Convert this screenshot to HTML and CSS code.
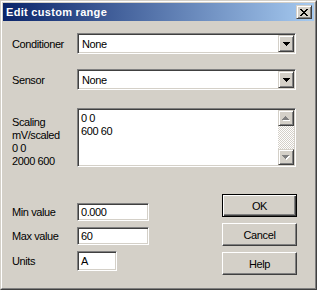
FILE: index.html
```html
<!DOCTYPE html>
<html>
<head>
    <title>Edit custom range</title>
    <link rel="stylesheet" href="styles.css">
</head>
<body>
    <div class="window">
        <div class="frame">
            <div class="caption">
                <span class="caption-title">Edit custom range</span>
                <button class="close-btn">
                    <svg width="8" height="7" viewBox="0 0 8 7" shape-rendering="crispEdges">
                        <path fill="#000" d="M0 0h2v1H0z M6 0h2v1H6z M1 1h2v1H1z M5 1h2v1H5z M2 2h4v1H2z M3 3h2v1H3z M2 4h4v1H2z M1 5h2v1H1z M5 5h2v1H5z M0 6h2v1H0z M6 6h2v1H6z"/>
                    </svg>
                </button>
            </div>

            <div class="client">
                <div class="row">
                    <span class="label">Conditioner</span>
                    <div class="combo">
                        <span class="combo-text">None</span>
                        <span class="arrow-btn">
                            <svg width="7" height="4" viewBox="0 0 7 4" shape-rendering="crispEdges">
                                <path fill="#000" d="M0 0h7v1H0z M1 1h5v1H1z M2 2h3v1H2z M3 3h1v1H3z"/>
                            </svg>
                        </span>
                    </div>
                </div>

                <div class="row row-sensor">
                    <span class="label">Sensor</span>
                    <div class="combo">
                        <span class="combo-text">None</span>
                        <span class="arrow-btn">
                            <svg width="7" height="4" viewBox="0 0 7 4" shape-rendering="crispEdges">
                                <path fill="#000" d="M0 0h7v1H0z M1 1h5v1H1z M2 2h3v1H2z M3 3h1v1H3z"/>
                            </svg>
                        </span>
                    </div>
                </div>

                <div class="row row-scaling">
                    <div class="label label-multi">Scaling<br>mV/scaled<br>0 0<br>2000 600</div>
                    <div class="memo">
                        <div class="memo-text">0 0<br>600 60</div>
                        <div class="scrollbar">
                            <span class="arrow-btn scroll-btn">
                                <svg width="8" height="5" viewBox="0 0 8 5" shape-rendering="crispEdges">
                                    <path fill="#fff" d="M4 1h1v1H4z M3 2h3v1H3z M2 3h5v1H2z M1 4h7v1H1z"/>
                                    <path fill="#808080" d="M3 0h1v1H3z M2 1h3v1H2z M1 2h5v1H1z M0 3h7v1H0z"/>
                                </svg>
                            </span>
                            <span class="scroll-track"></span>
                            <span class="arrow-btn scroll-btn">
                                <svg width="8" height="5" viewBox="0 0 8 5" shape-rendering="crispEdges">
                                    <path fill="#fff" d="M1 1h7v1H1z M2 2h5v1H2z M3 3h3v1H3z M4 4h1v1H4z"/>
                                    <path fill="#808080" d="M0 0h7v1H0z M1 1h5v1H1z M2 2h3v1H2z M3 3h1v1H3z"/>
                                </svg>
                            </span>
                        </div>
                    </div>
                </div>

                <div class="bottom">
                    <div class="fields">
                        <div class="field">
                            <span class="label">Min value</span>
                            <div class="input">0.000</div>
                        </div>
                        <div class="field">
                            <span class="label">Max value</span>
                            <div class="input">60</div>
                        </div>
                        <div class="field">
                            <span class="label">Units</span>
                            <div class="input input-units">A</div>
                        </div>
                    </div>
                    <div class="buttons">
                        <button class="btn btn-default">OK</button>
                        <button class="btn">Cancel</button>
                        <button class="btn">Help</button>
                    </div>
                </div>
            </div>
        </div>
    </div>
</body>
</html>
```

FILE: styles.css
```css
body {
    margin: 0;
    font-family: "Liberation Sans", Arial, sans-serif;
    font-size: 11px;
    color: #000;
}
.window {
    width: 317px;
    height: 290px;
    box-sizing: border-box;
    border: 1px solid;
    border-color: #d4d0c8 #404040 #404040 #d4d0c8;
    background: #d4d0c8;
}
.frame {
    height: 100%;
    box-sizing: border-box;
    border: 1px solid;
    border-color: #fff #808080 #808080 #fff;
    padding: 1px;
}
.caption {
    height: 18px;
    display: flex;
    align-items: center;
    justify-content: space-between;
    padding: 0 2px 0 3px;
    background: linear-gradient(90deg, #0a246a, #a6caf0);
}
.caption-title {
    color: #fff;
    font-weight: bold;
    letter-spacing: 0.3px;
}
.close-btn, .arrow-btn {
    box-sizing: border-box;
    display: flex;
    align-items: center;
    justify-content: center;
    padding: 0;
    background: #d4d0c8;
    border: 1px solid;
    border-color: #d4d0c8 #404040 #404040 #d4d0c8;
    box-shadow: inset 1px 1px #fff, inset -1px -1px #808080;
}
.close-btn {
    width: 16px;
    height: 14px;
}
.client {
    padding: 12px 18px 0 9px;
    letter-spacing: -0.4px;
}
.row {
    display: flex;
    align-items: center;
}
.label {
    width: 65px;
    flex: none;
}
.combo, .memo, .input {
    box-sizing: border-box;
    background: #fff;
    border: 1px solid;
    border-color: #808080 #fff #fff #808080;
    box-shadow: inset 1px 1px #404040, inset -1px -1px #d4d0c8;
}
.combo {
    width: 219px;
    height: 21px;
    display: flex;
    align-items: center;
    padding: 1px;
}
.combo-text {
    flex: 1;
    padding-left: 3px;
}
.arrow-btn {
    width: 16px;
    height: 17px;
}
.row-sensor {
    margin-top: 15px;
}
.row-scaling {
    align-items: flex-start;
    margin-top: 18px;
}
.label-multi {
    line-height: 13px;
    padding-top: 8px;
}
.memo {
    width: 219px;
    height: 59px;
    display: flex;
    padding: 1px;
}
.memo-text {
    flex: 1;
    padding: 2px 0 0 2px;
    line-height: 13px;
}
.scrollbar {
    width: 16px;
    display: flex;
    flex-direction: column;
}
.scroll-btn {
    height: 16px;
}
.scroll-track {
    flex: 1;
    background: repeating-conic-gradient(#fff 0 25%, #d4d0c8 0 50%) 0 0 / 2px 2px;
}
.bottom {
    display: flex;
    justify-content: space-between;
    margin-top: 26px;
    margin-right: -1px;
}
.fields {
    display: flex;
    flex-direction: column;
    gap: 6px;
    padding-top: 9px;
}
.field {
    display: flex;
    align-items: center;
}
.input {
    width: 72px;
    height: 18px;
    display: flex;
    align-items: center;
    padding-left: 3px;
}
.input-units {
    width: 40px;
    height: 20px;
}
.buttons {
    display: flex;
    flex-direction: column;
    gap: 6px;
}
.btn {
    width: 75px;
    height: 23px;
    box-sizing: border-box;
    padding: 0;
    font: inherit;
    letter-spacing: inherit;
    color: #000;
    background: #d4d0c8;
    border: 1px solid;
    border-color: #fff #404040 #404040 #fff;
    box-shadow: inset -1px -1px #808080;
}
.btn-default {
    border-color: #000;
    box-shadow: inset 1px 1px #fff, inset -1px -1px #404040, inset -2px -2px #808080;
}
```
